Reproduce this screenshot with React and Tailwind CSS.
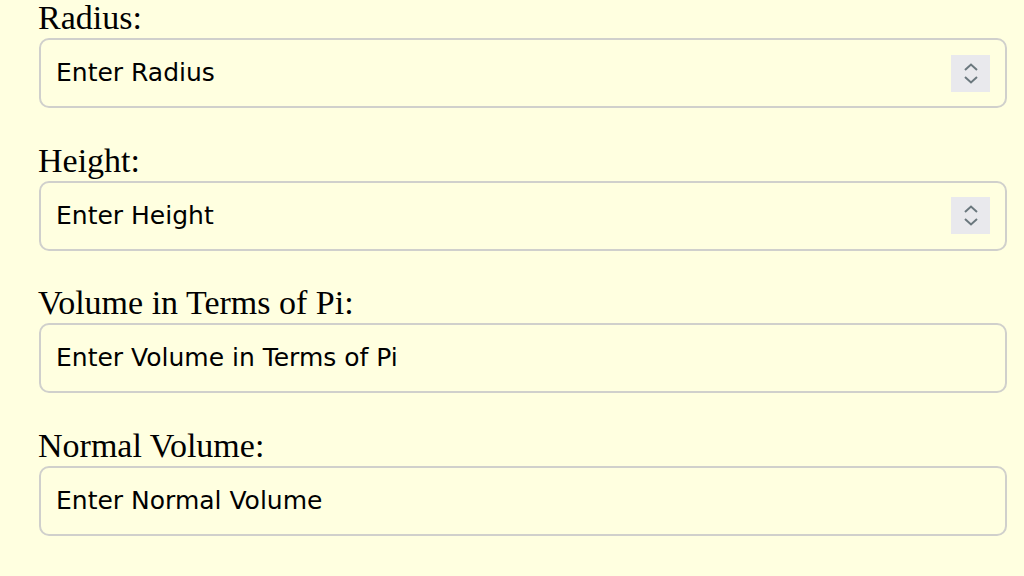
/**
 * App.jsx — Cylinder volume form.
 */

const fields = [
  { label: "Radius:", placeholder: "Enter Radius", spinner: true },
  { label: "Height:", placeholder: "Enter Height", spinner: true },
  { label: "Volume in Terms of Pi:", placeholder: "Enter Volume in Terms of Pi" },
  { label: "Normal Volume:", placeholder: "Enter Normal Volume" },
];

function Spinner() {
  return (
    <div className="w-[39px] h-[37px] bg-[#e9e9ed] flex flex-col items-center justify-center gap-[5px] shrink-0">
      <svg width="16" height="8" viewBox="0 0 16 8" fill="none">
        <path d="M2 7 L8 1.5 L14 7" stroke="#6b787e" strokeWidth="2" />
      </svg>
      <svg width="16" height="8" viewBox="0 0 16 8" fill="none">
        <path d="M2 1 L8 6.5 L14 1" stroke="#6b787e" strokeWidth="2" />
      </svg>
    </div>
  );
}

export default function App() {
  return (
    <div className="h-[576px] bg-[#ffffe0] pl-[38px] pr-[17px] overflow-hidden">
      <div className="-mt-[3px]">
        {fields.map((field, index) => (
          <div key={index} className="mb-[31.5px]">
            <label
              className="block text-[34px] text-black leading-[41px]"
              style={{ fontFamily: '"Liberation Serif", serif' }}
            >
              {field.label}
            </label>
            <div className="h-[70px] border-2 border-[#d0d0cc] rounded-[10px] flex items-center pl-[15px] pr-[15px] ml-[1px]">
              <input
                type="text"
                placeholder={field.placeholder}
                className="flex-1 min-w-0 bg-transparent outline-none text-[25px] text-black placeholder:text-black"
                style={{ fontFamily: '"DejaVu Sans", Verdana, sans-serif' }}
              />
              {field.spinner && <Spinner />}
            </div>
          </div>
        ))}
      </div>
    </div>
  );
}
